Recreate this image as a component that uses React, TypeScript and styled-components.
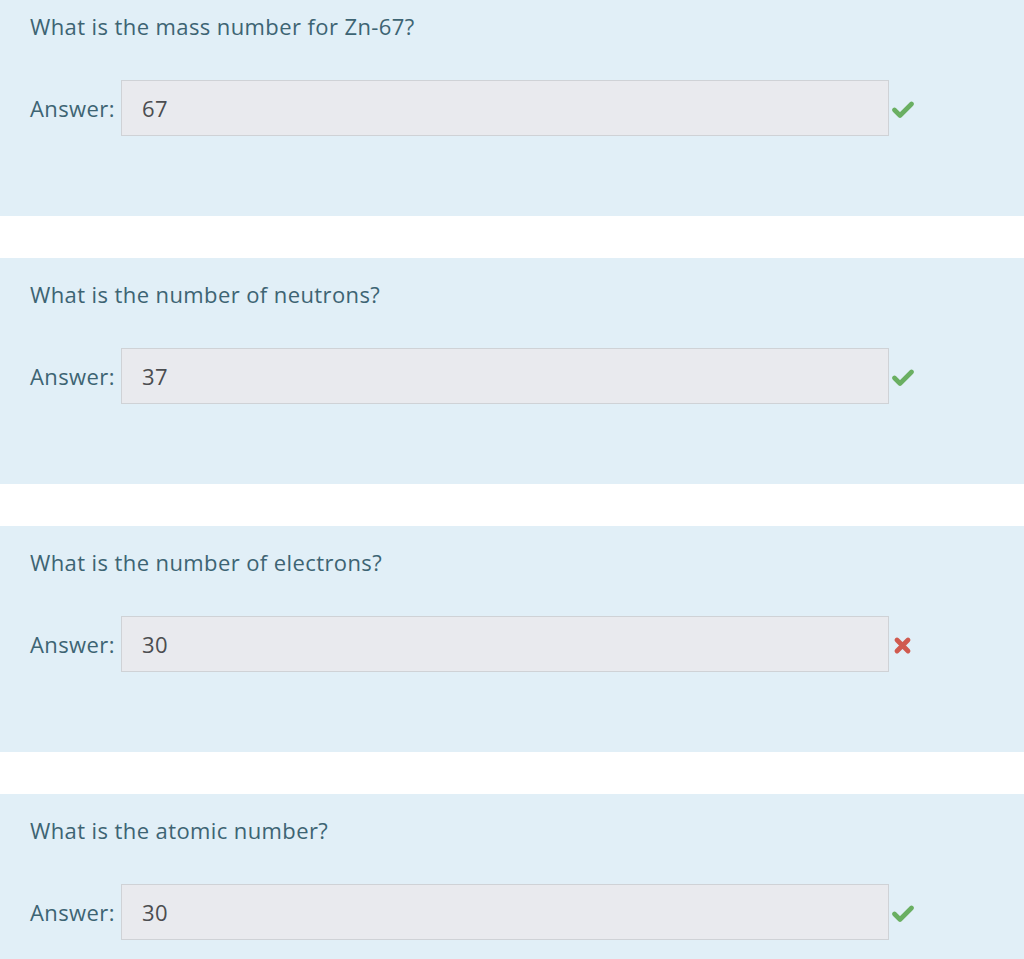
import React from "react";
import styled, { createGlobalStyle } from "styled-components";

const Global = createGlobalStyle`
  html, body { margin: 0; padding: 0; background: #ffffff; }
  body { font-family: "Open Sans", Lato, sans-serif; }
`;

const List = styled.div`
  display: flex;
  flex-direction: column;
  gap: 42px;
  margin-top: -10px;
`;

const Panel = styled.section`
  background: #e1eff7;
  height: 226px;
  box-sizing: border-box;
  padding: 22px 30px 0 30px;
  color: #3d6473;
`;

const Question = styled.div`
  font-size: 22px;
  letter-spacing: 0.4px;
  line-height: 28px;
`;

const Row = styled.div`
  display: flex;
  align-items: center;
  margin-top: 40px;
`;

const Label = styled.label`
  font-size: 22px;
  letter-spacing: 0.4px;
  line-height: 28px;
  width: 91px;
  flex: none;
`;

const Field = styled.div`
  box-sizing: border-box;
  width: 768px;
  height: 56px;
  background: #e9eaee;
  border: 1px solid #cfd2d6;
  display: flex;
  align-items: center;
  padding-left: 20px;
  font-size: 22px;
  letter-spacing: 0.4px;
  color: #4b4d50;
`;

const Mark = styled.span`
  display: flex;
  align-items: center;
  margin-left: 2px;
  margin-top: 2px;
`;

const Check = () => (
  <svg width="23" height="19" viewBox="0 0 23 19" fill="none">
    <polyline
      points="3.5,10 9,15.5 20.5,4"
      stroke="#6aaf62"
      strokeWidth="4.6"
      strokeLinecap="round"
      strokeLinejoin="round"
    />
  </svg>
);

const Cross = () => (
  <svg width="19" height="19" viewBox="0 0 19 19" fill="none" style={{ marginLeft: 2 }}>
    <path
      d="M4 4 L15 15 M15 4 L4 15"
      stroke="#d05a4f"
      strokeWidth="4.8"
      strokeLinecap="round"
    />
  </svg>
);

const items = [
  { q: "What is the mass number for Zn-67?", a: "67", ok: true },
  { q: "What is the number of neutrons?", a: "37", ok: true },
  { q: "What is the number of electrons?", a: "30", ok: false },
  { q: "What is the atomic number?", a: "30", ok: true },
];

export default function App() {
  return (
    <>
      <Global />
      <List>
        {items.map((it, i) => (
          <Panel key={i}>
            <Question>{it.q}</Question>
            <Row>
              <Label>Answer:</Label>
              <Field>{it.a}</Field>
              <Mark>{it.ok ? <Check /> : <Cross />}</Mark>
            </Row>
          </Panel>
        ))}
      </List>
    </>
  );
}
